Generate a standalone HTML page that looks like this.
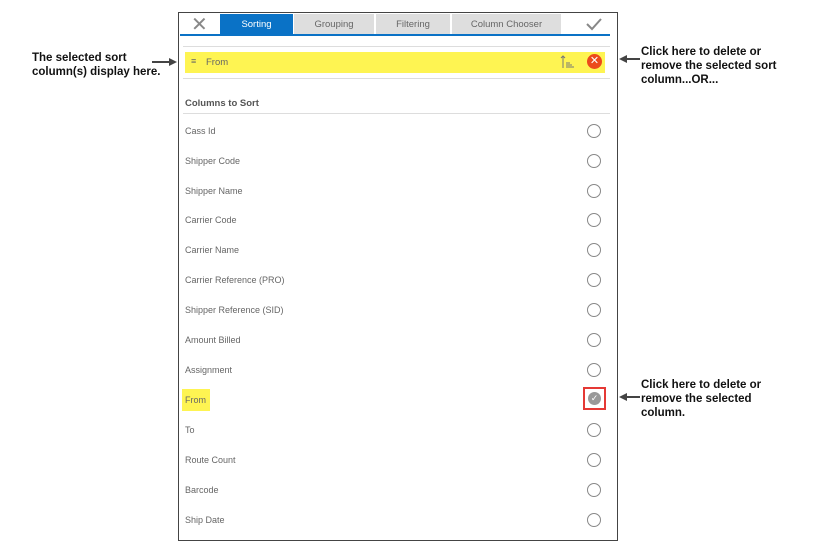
<!DOCTYPE html><html><head><style>
*{margin:0;padding:0;box-sizing:border-box}
body{width:814px;height:550px;background:#fff;position:relative;font-family:"Liberation Sans",sans-serif;overflow:hidden}
.a{position:absolute}
.ann{font-weight:bold;font-size:11.5px;line-height:14.2px;color:#111}
.row{position:absolute;left:185px;font-size:9px;color:#666}
.rad{position:absolute;left:587px;width:14px;height:14px;border:1.5px solid #888;border-radius:50%}
.tab{position:absolute;top:14px;height:20px;background:#dedede;font-size:9.5px;color:#666;text-align:center;line-height:21px}
</style></head><body>
<div class="a" style="left:178px;top:12px;width:440px;height:529px;border:1.5px solid #444"></div>
<div class="a" style="left:191px;top:16px;font-size:20px;color:#888;line-height:18px">✕</div>
<div class="tab" style="left:220px;width:73px;background:#0a72c6;color:#fff">Sorting</div>
<div class="tab" style="left:294px;width:80px">Grouping</div>
<div class="tab" style="left:376px;width:74px">Filtering</div>
<div class="tab" style="left:452px;width:109px">Column Chooser</div>
<svg class="a" style="left:585px;top:17px" width="18" height="14"><path d="M2 7 L7 12 L16 2" stroke="#888" stroke-width="2" fill="none"/></svg>
<div class="a" style="left:180px;top:34px;width:430px;height:2px;background:#0a72c6"></div>
<div class="a" style="left:183px;top:46px;width:427px;height:1px;background:#ddd"></div>
<div class="a" style="left:185px;top:52px;width:420px;height:21px;background:#fef452"></div>
<div class="a" style="left:191px;top:56px;font-size:9px;color:#666">≡</div>
<div class="a" style="left:206px;top:57px;font-size:9.5px;color:#666">From</div>
<svg class="a" style="left:560px;top:55px" width="16" height="14"><path d="M3 1V13M1 3L3 1L5 3M6 8H10M6 10H12M6 12H14" stroke="#777" fill="none"/></svg>
<div class="a" style="left:587px;top:54px;width:15px;height:15px;border-radius:50%;background:#ec4a1c;color:#fff;font-size:11px;text-align:center;line-height:15px">✕</div>
<div class="a" style="left:183px;top:78px;width:427px;height:1px;background:#ddd"></div>
<div class="a" style="left:185px;top:98px;font-size:9.5px;font-weight:bold;color:#555">Columns to Sort</div>
<div class="a" style="left:183px;top:113px;width:427px;height:1px;background:#ddd"></div>
<div class="row" style="top:126px">Cass Id</div><div class="rad" style="top:124px"></div>
<div class="row" style="top:156px">Shipper Code</div><div class="rad" style="top:154px"></div>
<div class="row" style="top:186px">Shipper Name</div><div class="rad" style="top:184px"></div>
<div class="row" style="top:215px">Carrier Code</div><div class="rad" style="top:213px"></div>
<div class="row" style="top:245px">Carrier Name</div><div class="rad" style="top:243px"></div>
<div class="row" style="top:275px">Carrier Reference (PRO)</div><div class="rad" style="top:273px"></div>
<div class="row" style="top:305px">Shipper Reference (SID)</div><div class="rad" style="top:303px"></div>
<div class="row" style="top:335px">Amount Billed</div><div class="rad" style="top:333px"></div>
<div class="row" style="top:365px">Assignment</div><div class="rad" style="top:363px"></div>
<div class="a" style="left:182px;top:389px;width:28px;height:22px;background:#fef452"></div>
<div class="row" style="top:395px">From</div>
<div class="a" style="left:583px;top:387px;width:23px;height:23px;border:2px solid #e53935"></div>
<div class="a" style="left:588px;top:392px;width:13px;height:13px;border-radius:50%;background:#999;color:#fff;font-size:9px;text-align:center;line-height:13px">✓</div>
<div class="row" style="top:425px">To</div><div class="rad" style="top:423px"></div>
<div class="row" style="top:455px">Route Count</div><div class="rad" style="top:453px"></div>
<div class="row" style="top:485px">Barcode</div><div class="rad" style="top:483px"></div>
<div class="row" style="top:515px">Ship Date</div><div class="rad" style="top:513px"></div>
<div class="a ann" style="left:32px;top:51px">The selected sort<br>column(s) display here.</div>
<svg class="a" style="left:152px;top:57px" width="26" height="10"><path d="M0 5H18" stroke="#444" stroke-width="2"/><path d="M17 1L25 5L17 9Z" fill="#444"/></svg>
<svg class="a" style="left:618px;top:54px" width="22" height="10"><path d="M8 5H22" stroke="#444" stroke-width="2"/><path d="M9 1L1 5L9 9Z" fill="#444"/></svg>
<div class="a ann" style="left:641px;top:45px">Click here to delete or<br>remove the selected sort<br>column...OR...</div>
<svg class="a" style="left:618px;top:392px" width="22" height="10"><path d="M8 5H22" stroke="#444" stroke-width="2"/><path d="M9 1L1 5L9 9Z" fill="#444"/></svg>
<div class="a ann" style="left:641px;top:378px">Click here to delete or<br>remove the selected<br>column.</div>
</body></html>
